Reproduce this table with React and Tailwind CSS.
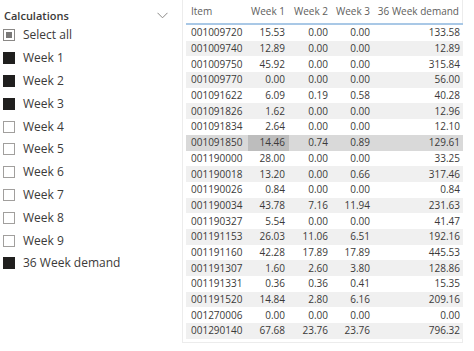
import React from "react";

const rows = [
  ["001009720", "15.53", "0.00", "0.00", "133.58"],
  ["001009740", "12.89", "0.00", "0.00", "12.89"],
  ["001009750", "45.92", "0.00", "0.00", "315.84"],
  ["001009770", "0.00", "0.00", "0.00", "56.00"],
  ["001091622", "6.09", "0.19", "0.58", "40.28"],
  ["001091826", "1.62", "0.00", "0.00", "12.96"],
  ["001091834", "2.64", "0.00", "0.00", "12.10"],
  ["001091850", "14.46", "0.74", "0.89", "129.61"],
  ["001190000", "28.00", "0.00", "0.00", "33.25"],
  ["001190018", "13.20", "0.00", "0.66", "317.46"],
  ["001190026", "0.84", "0.00", "0.00", "0.84"],
  ["001190034", "43.78", "7.16", "11.94", "231.63"],
  ["001190327", "5.54", "0.00", "0.00", "41.47"],
  ["001191153", "26.03", "11.06", "6.51", "192.16"],
  ["001191160", "42.28", "17.89", "17.89", "445.53"],
  ["001191307", "1.60", "2.60", "3.80", "128.86"],
  ["001191331", "0.36", "0.36", "0.41", "15.35"],
  ["001191520", "14.84", "2.80", "6.16", "209.16"],
  ["001270006", "0.00", "0.00", "0.00", "0.00"],
  ["001290140", "67.68", "23.76", "23.76", "796.32"],
];

const items = [
  ["Select all", "partial"],
  ["Week 1", "on"],
  ["Week 2", "on"],
  ["Week 3", "on"],
  ["Week 4", "off"],
  ["Week 5", "off"],
  ["Week 6", "off"],
  ["Week 7", "off"],
  ["Week 8", "off"],
  ["Week 9", "off"],
  ["36 Week demand", "on"],
];

function Box({ state }) {
  if (state === "on")
    return <div className="w-[12px] h-[12px] bg-[#201f1e] border border-[#201f1e]" />;
  if (state === "partial")
    return (
      <div className="w-[12px] h-[12px] border border-[#8a8886] flex items-center justify-center">
        <div className="w-[6px] h-[6px] bg-[#7a7978]" />
      </div>
    );
  return <div className="w-[12px] h-[12px] border border-[#a19f9d] bg-white" />;
}

export default function App() {
  const font = { fontFamily: '"Open Sans", "Noto Sans", sans-serif' };
  return (
    <div className="w-[474px] h-[351px] bg-white flex overflow-hidden" style={font}>
      <div className="w-[182px] shrink-0 flex flex-col">
        <div className="h-[24px] pt-[8px] pl-[4px] pr-[14px] flex items-center justify-between">
          <span className="text-[11px] leading-[16px] font-semibold text-[#3b3a39]">Calculations</span>
          <svg width="11" height="7" viewBox="0 0 11 7" className="mt-[-2px]">
            <path d="M0.5 0.8 L5.5 5.8 L10.5 0.8" fill="none" stroke="#8a8886" strokeWidth="1" />
          </svg>
        </div>
        {items.map(([label, st]) => (
          <div key={label} className="h-[22.8px] flex items-center pl-[3px] gap-[8px]">
            <Box state={st} />
            <span className="text-[12px] leading-[16px] text-[#3b3a39]">{label}</span>
          </div>
        ))}
      </div>
      <div className="w-[281px] h-[343px] border-l border-r border-b border-[#ececec] pl-[3px]">
        <div className="w-[277px]">
          <div className="h-[25px] flex items-center border-b-[2px] border-[#a9c8e6] text-[10px] text-[#605e5c] whitespace-nowrap">
            <div className="w-[62px] pl-[5px]">Item</div>
            <div className="w-[41px] text-right pr-[4px]">Week 1</div>
            <div className="w-[42px] text-right pr-[3px]">Week 2</div>
            <div className="w-[42px] text-right pr-[3px]">Week 3</div>
            <div className="w-[90px] text-right pr-[4px]">36 Week demand</div>
          </div>
          {rows.map((r, i) => {
            const hl = i === 7;
            const bg = hl ? "bg-[#d9d9d9]" : i % 2 === 1 ? "bg-[#f0f0f0]" : "bg-white";
            return (
              <div key={r[0]} className={`h-[15.7px] flex items-center text-[10px] leading-[15px] text-[#3b3a39] ${bg}`}>
                <div className="w-[62px] pl-[5px]">{r[0]}</div>
                <div className={`w-[41px] h-full flex items-center justify-end pr-[4px] ${hl ? "bg-[#bdbdbd]" : ""}`}>{r[1]}</div>
                <div className="w-[42px] text-right pr-[3px]">{r[2]}</div>
                <div className="w-[42px] text-right pr-[3px]">{r[3]}</div>
                <div className="w-[90px] text-right pr-[3px]">{r[4]}</div>
              </div>
            );
          })}
        </div>
      </div>
    </div>
  );
}
